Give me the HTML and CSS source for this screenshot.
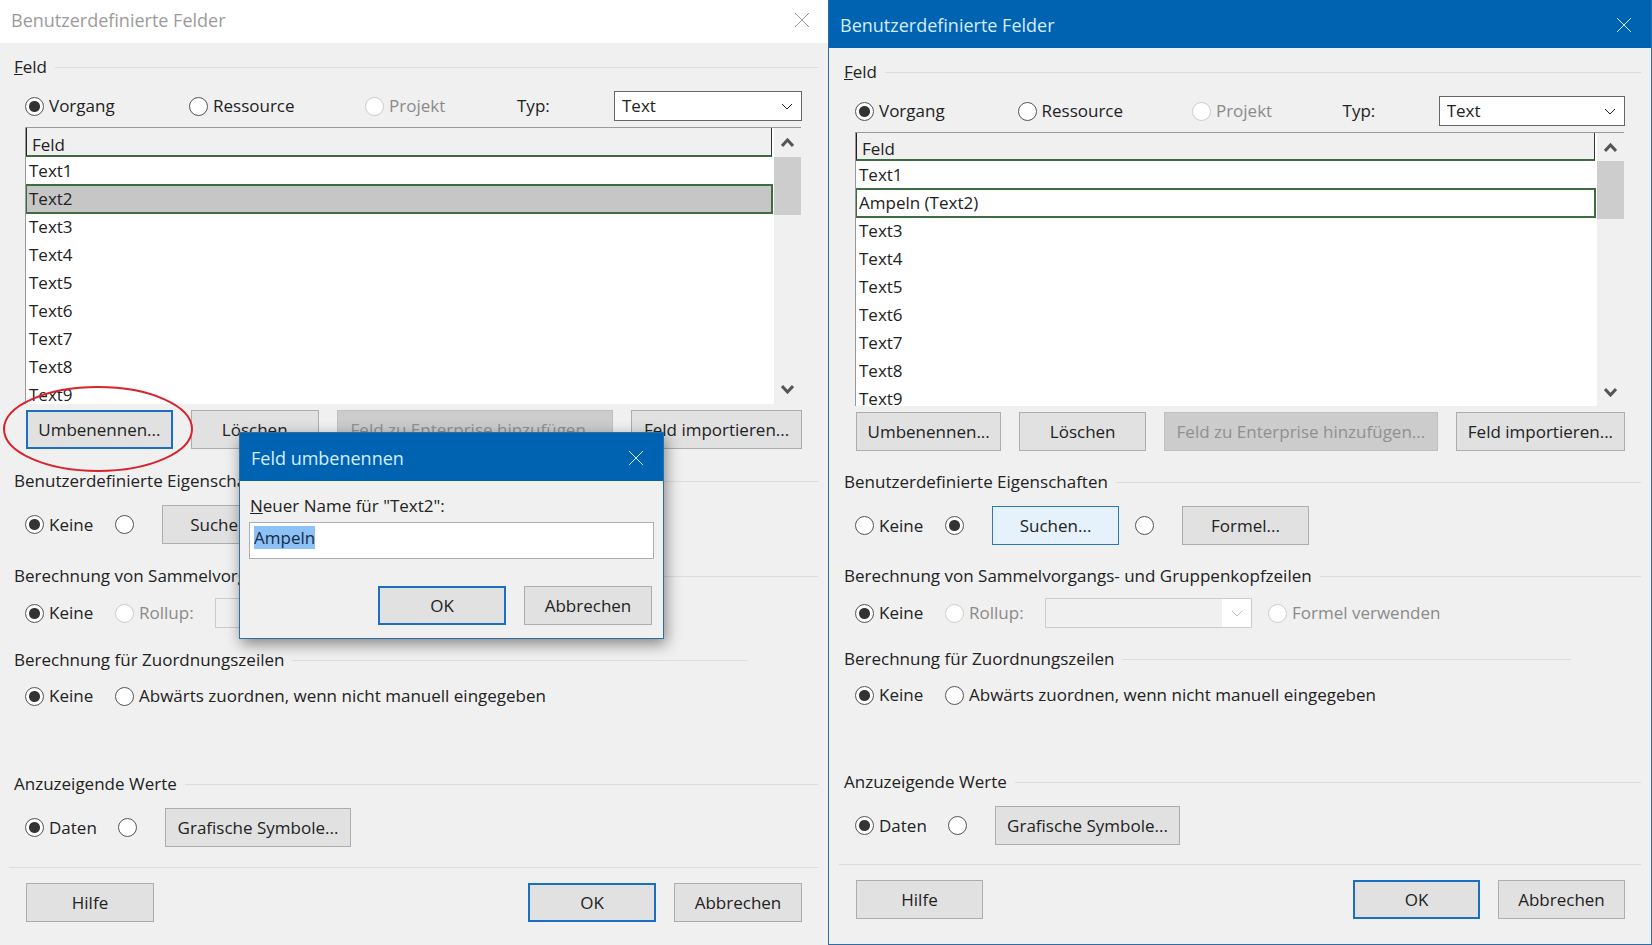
FILE: index.html
```html
<!DOCTYPE html>
<html lang="de">
<head>
    <meta charset="UTF-8">
    <meta name="viewport" content="width=device-width, initial-scale=1.0">
    <title>Benutzerdefinierte Felder</title>
    <link rel="stylesheet" href="styles.css">
</head>
<body>
    <div class="windows">

        <!-- window behind the rename dialog -->
        <section class="window inactive">
            <header class="titlebar">
                <h1>Benutzerdefinierte Felder</h1>
                <button class="close" aria-label="Schließen"><svg width="16" height="16" viewBox="0 0 16 16"><path d="M1 1L15 15M15 1L1 15"/></svg></button>
            </header>
            <form class="content">
                <fieldset>
                    <legend><span><u>F</u>eld</span></legend>
                    <div class="row type-row">
                        <label><input type="radio" name="a-art" checked>Vorgang</label>
                        <label><input type="radio" name="a-art">Ressource</label>
                        <label class="off"><input type="radio" name="a-art" disabled>Projekt</label>
                        <label for="a-typ">Typ:</label>
                        <div class="select">
                            <select id="a-typ"><option>Text</option></select>
                            <svg width="12" height="8" viewBox="0 0 12 8"><path d="M1 1L6 6L11 1"/></svg>
                        </div>
                    </div>
                    <div class="list">
                        <table>
                            <thead><tr><th>Feld</th></tr></thead>
                            <tbody>
                                <tr><td>Text1</td></tr>
                                <tr class="selected"><td>Text2</td></tr>
                                <tr><td>Text3</td></tr>
                                <tr><td>Text4</td></tr>
                                <tr><td>Text5</td></tr>
                                <tr><td>Text6</td></tr>
                                <tr><td>Text7</td></tr>
                                <tr><td>Text8</td></tr>
                                <tr><td>Text9</td></tr>
                            </tbody>
                        </table>
                        <div class="scrollbar">
                            <button type="button" aria-label="Nach oben"><svg width="13" height="9" viewBox="0 0 13 9"><path d="M1 8L6.500 2L12 8"/></svg></button>
                            <div class="thumb"></div>
                            <button type="button" class="down" aria-label="Nach unten"><svg width="13" height="9" viewBox="0 0 13 9"><path d="M1 1L6.500 7L12 1"/></svg></button>
                        </div>
                    </div>
                    <div class="actions">
                        <button type="button" class="default">Umbenennen...</button>
                        <button type="button">Löschen</button>
                        <button type="button" disabled>Feld zu Enterprise hinzufügen...</button>
                        <button type="button">Feld importieren...</button>
                    </div>
                </fieldset>
                <fieldset>
                    <legend><span>Benutzerdefinierte Eigenschaften</span></legend>
                    <div class="row">
                        <label class="first"><input type="radio" name="a-eig" checked>Keine</label>
                        <input type="radio" class="lone" name="a-eig" aria-label="Suchen">
                        <button type="button">Suchen...</button>
                        <input type="radio" class="lone next" name="a-eig" aria-label="Formel">
                        <button type="button">Formel...</button>
                    </div>
                </fieldset>
                <fieldset class="tight">
                    <legend><span>Berechnung von Sammelvorgangs- und Gruppenkopfzeilen</span></legend>
                    <div class="row">
                        <label class="first"><input type="radio" name="a-sam" checked>Keine</label>
                        <label class="off rollup"><input type="radio" name="a-sam" disabled>Rollup:</label>
                        <div class="select off">
                            <select aria-label="Rollup" disabled></select>
                            <svg width="12" height="8" viewBox="0 0 12 8"><path d="M1 1L6 6L11 1"/></svg>
                        </div>
                        <label class="off"><input type="radio" name="a-sam" disabled>Formel verwenden</label>
                    </div>
                </fieldset>
                <fieldset class="assign">
                    <legend><span>Berechnung für Zuordnungszeilen</span></legend>
                    <div class="row">
                        <label class="first"><input type="radio" name="a-zuo" checked>Keine</label>
                        <label><input type="radio" name="a-zuo">Abwärts zuordnen, wenn nicht manuell eingegeben</label>
                    </div>
                </fieldset>
                <fieldset>
                    <legend><span>Anzuzeigende Werte</span></legend>
                    <div class="row values">
                        <label class="first"><input type="radio" name="a-wer" checked>Daten</label>
                        <input type="radio" class="lone" name="a-wer" aria-label="Grafische Symbole">
                        <button type="button" class="wide">Grafische Symbole...</button>
                    </div>
                </fieldset>
                <footer>
                    <button type="button">Hilfe</button>
                    <button type="button" class="default">OK</button>
                    <button type="button">Abbrechen</button>
                </footer>
            </form>

            <svg class="mark" viewBox="0 0 190 86"><ellipse cx="95" cy="43" rx="94" ry="42"/></svg>

            <dialog class="rename" open>
                <header class="titlebar">
                    <h2>Feld umbenennen</h2>
                    <button class="close" aria-label="Schließen"><svg width="16" height="16" viewBox="0 0 16 16"><path d="M1 1L15 15M15 1L1 15"/></svg></button>
                </header>
                <label for="newName"><u>N</u>euer Name für "Text2":</label>
                <input type="text" id="newName" value="Ampeln" autofocus>
                <div class="buttons">
                    <button type="button" class="default">OK</button>
                    <button type="button">Abbrechen</button>
                </div>
            </dialog>
        </section>

        <!-- window after renaming -->
        <section class="window active">
            <header class="titlebar">
                <h1>Benutzerdefinierte Felder</h1>
                <button class="close" aria-label="Schließen"><svg width="16" height="16" viewBox="0 0 16 16"><path d="M1 1L15 15M15 1L1 15"/></svg></button>
            </header>
            <form class="content">
                <fieldset>
                    <legend><span><u>F</u>eld</span></legend>
                    <div class="row type-row">
                        <label><input type="radio" name="b-art" checked>Vorgang</label>
                        <label><input type="radio" name="b-art">Ressource</label>
                        <label class="off"><input type="radio" name="b-art" disabled>Projekt</label>
                        <label for="b-typ">Typ:</label>
                        <div class="select">
                            <select id="b-typ"><option>Text</option></select>
                            <svg width="12" height="8" viewBox="0 0 12 8"><path d="M1 1L6 6L11 1"/></svg>
                        </div>
                    </div>
                    <div class="list">
                        <table>
                            <thead><tr><th>Feld</th></tr></thead>
                            <tbody>
                                <tr><td>Text1</td></tr>
                                <tr class="current"><td>Ampeln (Text2)</td></tr>
                                <tr><td>Text3</td></tr>
                                <tr><td>Text4</td></tr>
                                <tr><td>Text5</td></tr>
                                <tr><td>Text6</td></tr>
                                <tr><td>Text7</td></tr>
                                <tr><td>Text8</td></tr>
                                <tr><td>Text9</td></tr>
                            </tbody>
                        </table>
                        <div class="scrollbar">
                            <button type="button" aria-label="Nach oben"><svg width="13" height="9" viewBox="0 0 13 9"><path d="M1 8L6.500 2L12 8"/></svg></button>
                            <div class="thumb"></div>
                            <button type="button" class="down" aria-label="Nach unten"><svg width="13" height="9" viewBox="0 0 13 9"><path d="M1 1L6.500 7L12 1"/></svg></button>
                        </div>
                    </div>
                    <div class="actions">
                        <button type="button">Umbenennen...</button>
                        <button type="button">Löschen</button>
                        <button type="button" disabled>Feld zu Enterprise hinzufügen...</button>
                        <button type="button">Feld importieren...</button>
                    </div>
                </fieldset>
                <fieldset>
                    <legend><span>Benutzerdefinierte Eigenschaften</span></legend>
                    <div class="row">
                        <label class="first"><input type="radio" name="b-eig">Keine</label>
                        <input type="radio" class="lone" name="b-eig" aria-label="Suchen" checked>
                        <button type="button" class="hot">Suchen...</button>
                        <input type="radio" class="lone next" name="b-eig" aria-label="Formel">
                        <button type="button">Formel...</button>
                    </div>
                </fieldset>
                <fieldset class="tight">
                    <legend><span>Berechnung von Sammelvorgangs- und Gruppenkopfzeilen</span></legend>
                    <div class="row">
                        <label class="first"><input type="radio" name="b-sam" checked>Keine</label>
                        <label class="off rollup"><input type="radio" name="b-sam" disabled>Rollup:</label>
                        <div class="select off">
                            <select aria-label="Rollup" disabled></select>
                            <svg width="12" height="8" viewBox="0 0 12 8"><path d="M1 1L6 6L11 1"/></svg>
                        </div>
                        <label class="off"><input type="radio" name="b-sam" disabled>Formel verwenden</label>
                    </div>
                </fieldset>
                <fieldset class="assign">
                    <legend><span>Berechnung für Zuordnungszeilen</span></legend>
                    <div class="row">
                        <label class="first"><input type="radio" name="b-zuo" checked>Keine</label>
                        <label><input type="radio" name="b-zuo">Abwärts zuordnen, wenn nicht manuell eingegeben</label>
                    </div>
                </fieldset>
                <fieldset>
                    <legend><span>Anzuzeigende Werte</span></legend>
                    <div class="row values">
                        <label class="first"><input type="radio" name="b-wer" checked>Daten</label>
                        <input type="radio" class="lone" name="b-wer" aria-label="Grafische Symbole">
                        <button type="button" class="wide">Grafische Symbole...</button>
                    </div>
                </fieldset>
                <footer>
                    <button type="button">Hilfe</button>
                    <button type="button" class="default">OK</button>
                    <button type="button">Abbrechen</button>
                </footer>
            </form>
        </section>
    </div>

    <script>
        const newName = document.getElementById('newName');
        newName.focus();
        newName.select();
    </script>
</body>
</html>
```
FILE: styles.css
```css
*{
    box-sizing: border-box;
}
body{
    margin: 0;
    background: #f0f0f0;
    color: #222;
    font-family: "Open Sans", "Noto Sans", sans-serif;
    font-size: 17px;
    line-height: 24px;
}
button, input, select{
    font: inherit;
    color: inherit;
    margin: 0;
}
svg{
    display: block;
    fill: none;
    stroke: currentColor;
}
.windows{
    display: grid;
    grid-template-columns: 207fr 206fr;
    min-height: 100vh;
}
.window{
    position: relative;
    --btn: 128px;
    --wide: 186px;
    --gap: 20px;
    --list: 277px;
    --head: 29px;
}
.active{
    border: 1px solid #2f6ea5;
    border-top: 0;
    --btn: 127px;
    --wide: 185px;
    --gap: 19px;
    --list: 274px;
    --head: 28px;
}

/* title bar */
.titlebar{
    display: flex;
    align-items: center;
    justify-content: space-between;
    height: 48px;
    padding: 2px 19px 0 11px;
    background: #0063b1;
    color: #d5ecff;
}
.titlebar h1, .titlebar h2{
    margin: 0;
    font-size: 18px;
    font-weight: normal;
}
.inactive > .titlebar{
    height: 43px;
    padding: 0 18px 4px 11px;
    background: white;
    color: #9b9b9b;
}
.close{
    border: 0;
    padding: 0;
    background: none;
}

/* groups */
.content{
    padding: 12px 10px 0 14px;
}
.active .content{
    padding-left: 15px;
}
fieldset{
    border: 0;
    margin: 0 0 var(--gap);
    padding: 0;
    min-width: 0;
}
legend{
    display: flex;
    align-items: center;
    gap: 8px;
    width: 100%;
    padding: 0;
    margin-bottom: 12px;
}
legend::after{
    content: "";
    flex: 1;
    height: 1px;
    background: #dcdcdc;
}
.tight legend{
    margin-bottom: 10px;
}
.assign{
    padding-bottom: 44px;
}
.assign legend{
    padding-right: 70px;
}
.row{
    display: flex;
    align-items: center;
    margin: 0 16px 0 11px;
}
.type-row{
    display: grid;
    grid-template-columns: 164fr 176fr 152fr 97fr 188fr;
    margin-bottom: 6px;
}
label{
    display: flex;
    align-items: center;
    gap: 5px;
    white-space: nowrap;
}
.first{
    width: 90px;
}
.values .first{
    width: 93px;
}
.rollup{
    width: 100px;
}
.off{
    color: #8a8a8a;
}

/* radio buttons */
input[type=radio]{
    appearance: none;
    flex: none;
    width: 19px;
    height: 19px;
    border: 1px solid #555;
    border-radius: 50%;
    background: white;
}
input[type=radio]:checked{
    background: radial-gradient(circle, #333 5px, white 6px);
}
input[type=radio]:disabled{
    border-color: #ccc;
}
.lone{
    margin-right: 28px;
}
.next{
    margin-left: 16px;
}

/* drop-downs */
.select{
    position: relative;
    height: 30px;
}
.select select{
    appearance: none;
    display: block;
    width: 100%;
    height: 100%;
    padding: 0 7px;
    border: 1px solid #666;
    border-radius: 0;
    background: white;
}
.select svg{
    position: absolute;
    right: 9px;
    top: 12px;
}
.select.off{
    width: 207px;
    margin-right: 16px;
    color: #bbb;
}
.select.off select{
    border-color: #ccc;
    opacity: 1;
    background: linear-gradient(to left, white 29px, #f0f0f0 29px);
}

/* field list */
.list{
    display: flex;
    height: var(--list);
    margin: 0 17px 6px 11px;
    overflow: hidden;
    border-top: 1px solid #999;
    border-left: 1px solid #999;
    background: white;
}
table{
    flex: 1;
    align-self: flex-start;
    border-collapse: separate;
    border-spacing: 0;
}
td{
    height: 28px;
    padding: 0 3px;
}
th{
    height: var(--head);
    padding: 6px 5px 0;
    line-height: 20px;
    text-align: left;
    font-weight: normal;
    border-left: 1px solid #222;
    border-right: 1px solid #333;
    border-bottom: 2px solid #3f6b41;
    background: #f0f0f0;
}
.selected, .current{
    outline: 2px solid #3f6b41;
    outline-offset: -1px;
}
.selected td{
    background: #c6c6c6;
}
.scrollbar{
    display: flex;
    flex-direction: column;
    width: 27px;
    margin-left: 2px;
    background: #f0f0f0;
}
.scrollbar button{
    display: flex;
    align-items: center;
    justify-content: center;
    height: var(--head);
    padding: 0;
    border: 0;
    background: none;
    color: #555;
    stroke-width: 3;
}
.scrollbar .down{
    margin-top: auto;
}
.thumb{
    height: 58px;
    background: #cdcdcd;
}

/* push buttons */
.actions{
    display: grid;
    grid-template-columns: 147fr 128fr 277fr 171fr;
    gap: 18px;
    margin: 0 16px 0 12px;
}
.actions button, .row button, footer button, .buttons button{
    height: 39px;
    padding: 0;
    border: 1px solid #adadad;
    background: #e1e1e1;
    white-space: nowrap;
}
.row button, footer button, .buttons button{
    width: var(--btn);
}
.row .wide{
    width: var(--wide);
}
.actions button:disabled{
    border-color: #bfbfbf;
    background: #ccc;
    color: #909090;
}
.actions .default, footer .default, .buttons .default{
    border: 2px solid #1a6fc0;
}
.row .hot{
    border-color: #2878bb;
    background: #e5f1fb;
}
footer{
    display: flex;
    gap: 18px;
    margin-left: -5px;
    padding: 15px 16px 22px 17px;
    border-top: 1px solid #dcdcdc;
}
footer button:first-child{
    margin-right: auto;
}

/* rename dialog */
.rename{
    position: absolute;
    left: 239px;
    top: 432px;
    width: 425px;
    margin: 0;
    padding: 0 0 13px;
    border: 1px solid #2f6ea5;
    background: #f0f0f0;
    color: #222;
    box-shadow: 2px 5px 14px rgba(0, 0, 0, 0.45);
}
.rename > label{
    display: block;
    margin: 13px 10px 4px;
}
.rename input{
    display: block;
    width: 405px;
    height: 37px;
    margin-left: 9px;
    padding: 0 4px 6px;
    border: 1px solid #adadad;
    background: white;
    outline: none;
}
.rename input::selection{
    background: #8cc2f7;
    color: #1a2a44;
}
.buttons{
    display: flex;
    justify-content: flex-end;
    gap: 18px;
    margin: 27px 11px 0;
}

/* red ring round the rename button */
.mark{
    position: absolute;
    left: 3px;
    top: 386px;
    width: 190px;
    height: 86px;
    stroke: #d8222c;
    stroke-width: 2;
    pointer-events: none;
}
```
